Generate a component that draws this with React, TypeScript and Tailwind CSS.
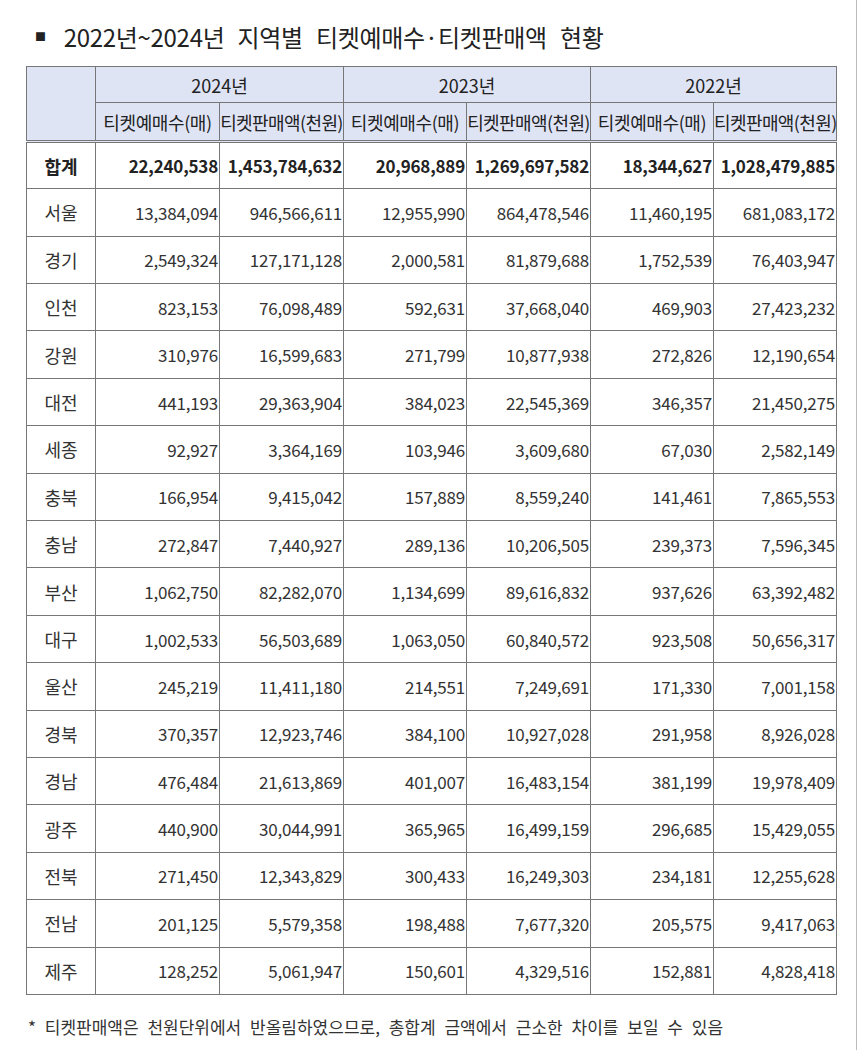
const rows: [string, string[]][] = [
  ["합계", ["22,240,538", "1,453,784,632", "20,968,889", "1,269,697,582", "18,344,627", "1,028,479,885"]],
  ["서울", ["13,384,094", "946,566,611", "12,955,990", "864,478,546", "11,460,195", "681,083,172"]],
  ["경기", ["2,549,324", "127,171,128", "2,000,581", "81,879,688", "1,752,539", "76,403,947"]],
  ["인천", ["823,153", "76,098,489", "592,631", "37,668,040", "469,903", "27,423,232"]],
  ["강원", ["310,976", "16,599,683", "271,799", "10,877,938", "272,826", "12,190,654"]],
  ["대전", ["441,193", "29,363,904", "384,023", "22,545,369", "346,357", "21,450,275"]],
  ["세종", ["92,927", "3,364,169", "103,946", "3,609,680", "67,030", "2,582,149"]],
  ["충북", ["166,954", "9,415,042", "157,889", "8,559,240", "141,461", "7,865,553"]],
  ["충남", ["272,847", "7,440,927", "289,136", "10,206,505", "239,373", "7,596,345"]],
  ["부산", ["1,062,750", "82,282,070", "1,134,699", "89,616,832", "937,626", "63,392,482"]],
  ["대구", ["1,002,533", "56,503,689", "1,063,050", "60,840,572", "923,508", "50,656,317"]],
  ["울산", ["245,219", "11,411,180", "214,551", "7,249,691", "171,330", "7,001,158"]],
  ["경북", ["370,357", "12,923,746", "384,100", "10,927,028", "291,958", "8,926,028"]],
  ["경남", ["476,484", "21,613,869", "401,007", "16,483,154", "381,199", "19,978,409"]],
  ["광주", ["440,900", "30,044,991", "365,965", "16,499,159", "296,685", "15,429,055"]],
  ["전북", ["271,450", "12,343,829", "300,433", "16,249,303", "234,181", "12,255,628"]],
  ["전남", ["201,125", "5,579,358", "198,488", "7,677,320", "205,575", "9,417,063"]],
  ["제주", ["128,252", "5,061,947", "150,601", "4,329,516", "152,881", "4,828,418"]],
];

const years = ["2024년", "2023년", "2022년"];

export default function App() {
  return (
    <div className="w-[860px] h-[1050px] bg-white text-[#222] font-['Noto_Sans_CJK_KR','Noto_Sans',sans-serif] flex">
      <div className="w-[857px] border-r border-[#bbb] flex flex-col">
        <h1 className="flex items-center pl-[35px] pt-[17px] h-[66px] pb-[10px] text-[24px] leading-none tracking-[-0.3px] [word-spacing:8px]">
          <span className="text-[11px] mr-[18px]">■</span>
          2022년~2024년 지역별 티켓예매수·티켓판매액 현황
        </h1>
        <table className="ml-[26px] w-[810px] border-collapse table-fixed text-[17px] leading-none">
          <colgroup>
            <col className="w-[69px]" />
            <col className="w-[124px]" />
            <col className="w-[124px]" />
            <col className="w-[123px]" />
            <col className="w-[124px]" />
            <col className="w-[123px]" />
            <col className="w-[123px]" />
          </colgroup>
          <thead className="bg-[#dfe4f5]">
            <tr className="h-[36px]">
              <th rowSpan={2} className="border border-[#777] border-b-[3px] border-double"></th>
              {years.map((y) => (
                <th key={y} colSpan={2} className="border border-[#777] font-normal text-[18px] text-center">
                  {y}
                </th>
              ))}
            </tr>
            <tr className="h-[39px]">
              {years.map((y) => (
                <>
                  <th key={y + "a"} className="border border-[#777] border-b-[3px] border-double font-normal text-[18px] text-center tracking-[-0.4px] whitespace-nowrap">
                    티켓예매수(매)
                  </th>
                  <th key={y + "b"} className="border border-[#777] border-b-[3px] border-double font-normal text-[18px] text-center tracking-[-0.6px] whitespace-nowrap">
                    티켓판매액(천원)
                  </th>
                </>
              ))}
            </tr>
          </thead>
          <tbody>
            {rows.map(([name, vals], i) => (
              <tr key={name} className={i === 0 ? "h-[47.3px] font-semibold" : "h-[47.4px] text-[#333]"}>
                <td className="border border-[#777] text-center text-[18px]">{name}</td>
                {vals.map((v, j) => (
                  <td key={j} className="border border-[#777] text-right pr-[1px] tracking-[-0.2px]">
                    {v}
                  </td>
                ))}
              </tr>
            ))}
          </tbody>
        </table>
        <p className="ml-[28px] mt-[19px] text-[17px] text-[#333] [word-spacing:5px]">
          * 티켓판매액은 천원단위에서 반올림하였으므로, 총합계 금액에서 근소한 차이를 보일 수 있음
        </p>
      </div>
    </div>
  );
}
